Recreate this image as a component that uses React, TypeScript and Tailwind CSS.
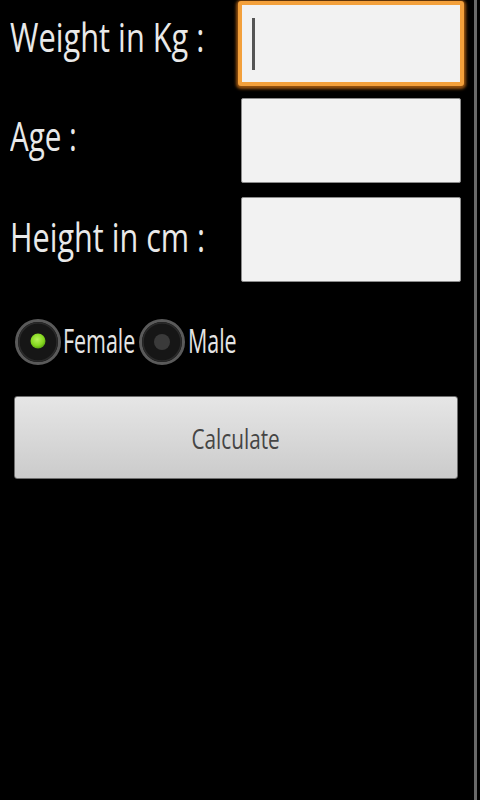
import React from "react";

const font = { fontFamily: '"Open Sans", "Noto Sans", sans-serif' };

function Caret() {
  return <div className="w-[3px] h-[52px] bg-[#555555]" />;
}

function Field({ focused = false }: { focused?: boolean }) {
  if (focused) {
    return (
      <div className="shrink-0 mr-[10px] pt-[1px]">
        <div className="w-[226px] h-[85px] rounded-[3px] border-[4px] border-[#f3a03b] bg-[#f2f2f2] shadow-[0_1px_3px_2px_rgba(200,110,20,0.75)] flex items-center pl-[10px]">
          <Caret />
        </div>
      </div>
    );
  }
  return (
    <div className="shrink-0 mr-[13px] w-[220px] h-[85px] rounded-[2px] border border-[#8c8c8c] bg-[#f2f2f2]" />
  );
}

function Label({ text, top, scale }: { text: string; top: string; scale: string }) {
  return (
    <div className={`flex-1 min-w-0 overflow-visible pl-[10px] ${top}`}>
      <span
        className={`inline-block origin-left whitespace-nowrap text-[40px] leading-none text-[#e9e9e9] ${scale}`}
      >
        {text}
      </span>
    </div>
  );
}

function RadioDot({ checked }: { checked: boolean }) {
  return (
    <svg width="48" height="48" viewBox="0 0 48 48" className="shrink-0">
      <defs>
        <radialGradient id="green" cx="45%" cy="40%" r="60%">
          <stop offset="0%" stopColor="#b6f25a" />
          <stop offset="70%" stopColor="#84d61e" />
          <stop offset="100%" stopColor="#5aa512" />
        </radialGradient>
      </defs>
      <circle cx="24" cy="24" r="21.5" fill="#161616" stroke="#5a5a5a" strokeWidth="3" />
      <circle cx="24" cy="24" r="19" fill="none" stroke="#2a2a2a" strokeWidth="1.5" />
      {checked ? (
        <circle cx="24" cy="23" r="7.5" fill="url(#green)" />
      ) : (
        <circle cx="24" cy="24" r="8" fill="#3a3a3a" />
      )}
    </svg>
  );
}

function RadioLabel({ text, width }: { text: string; width: string }) {
  return (
    <div className={`${width} shrink-0 overflow-visible`}>
      <span className="inline-block origin-left whitespace-nowrap text-[32px] leading-none text-[#e4e4e4] scale-x-[0.67]">
        {text}
      </span>
    </div>
  );
}

export default function App() {
  return (
    <div className="w-[480px] h-[800px] bg-black flex overflow-hidden" style={font}>
      <div className="w-[474px] flex flex-col">
        {/* Weight */}
        <div className="h-[86px] flex items-start">
          <Label text="Weight in Kg :" top="pt-[17px]" scale="scale-x-[0.77]" />
          <Field focused />
        </div>

        {/* Age */}
        <div className="mt-[12px] h-[85px] flex items-start">
          <Label text="Age :" top="pt-[18px]" scale="scale-x-[0.74]" />
          <Field />
        </div>

        {/* Height */}
        <div className="mt-[14px] h-[85px] flex items-start">
          <Label text="Height in cm :" top="pt-[20px]" scale="scale-x-[0.765]" />
          <Field />
        </div>

        {/* Gender */}
        <div className="mt-[36px] h-[48px] pl-[14px] flex items-center">
          <RadioDot checked />
          <div className="w-[1px]" />
          <RadioLabel text="Female" width="w-[75px]" />
          <RadioDot checked={false} />
          <div className="w-[2px]" />
          <RadioLabel text="Male" width="w-[50px]" />
        </div>

        {/* Calculate */}
        <div className="mt-[30px] pl-[14px]">
          <button className="w-[444px] h-[83px] rounded-[3px] border border-[#6e6e6e] bg-gradient-to-b from-[#e6e6e6] to-[#cbcbcb] flex items-center justify-center">
            <span className="inline-block whitespace-nowrap text-[28px] leading-none text-[#454545] scale-x-[0.74]">
              Calculate
            </span>
          </button>
        </div>
      </div>
      <div className="w-[3px] bg-[#696969]" />
      <div className="w-[3px]" />
    </div>
  );
}
